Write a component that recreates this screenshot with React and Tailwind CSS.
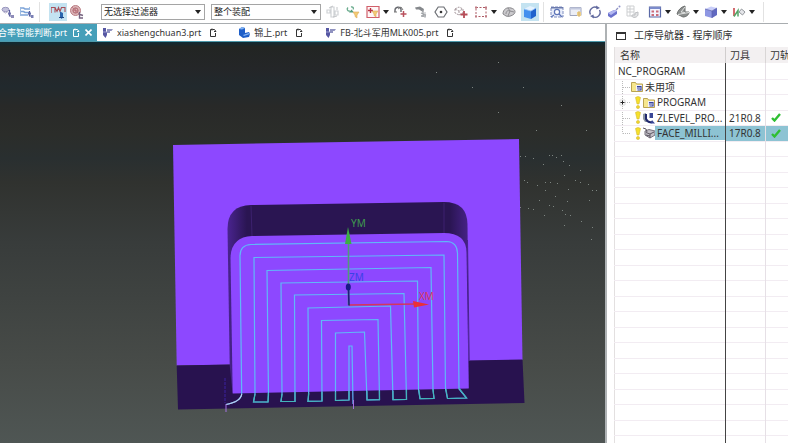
import React, { useState } from "react";

const Svg = ({ children }) => (
  <svg viewBox="0 0 16 16" className="size-4 shrink-0" fill="none">
    {children}
  </svg>
);

const Caret = () => (
  <svg viewBox="0 0 6 4" className="h-1 w-1.5 shrink-0">
    <path d="M0 0h6L3 4z" fill="#222" />
  </svg>
);

// small filter funnel used by several icons
const Funnel = ({ x, y }) => (
  <path d={`M${x} ${y}h6l-2 3v3l-2-1.500v-1.500z`} fill="#f3cb74" stroke="#dba95a" strokeWidth="0.6" />
);

const icons = {
  wcs: (
    <Svg>
      <ellipse cx="5.500" cy="5.500" rx="3.500" ry="2.200" fill="#c3c1dc" stroke="#9a98bf" />
      <path d="M3 7.500L5.500 9 8 7.500" stroke="#b4b1cd" />
      <path d="M9.500 6v6H12" stroke="#5c5f9f" strokeWidth="1.200" />
      <circle cx="9.500" cy="9.500" r="1.500" fill="#686aa8" />
      <path d="M11 11h3v3h-3z" fill="#8f8db9" />
    </Svg>
  ),
  layers: (
    <Svg>
      <path d="M1.500 4h3l1.500 1h5M1.500 7.500h3l1.500 1H10M2 11h7" stroke="#7ea4d8" strokeWidth="1.600" />
      <path d="M1.500 3v9M10.500 3v3" stroke="#9bbbe2" />
      <path d="M10.500 7v5H14" stroke="#4c5699" strokeWidth="1.200" />
      <circle cx="10.500" cy="9.500" r="1.500" fill="#5d66a5" />
      <path d="M12 11h2.500v3H12z" fill="#7b80b5" />
    </Svg>
  ),
  path: (
    <Svg>
      <path d="M1 3.500h4v5M5 3.500l2 4 1.500-4 1.500 4 1.500-4H15V8" stroke="#a8505a" strokeWidth="1.100" />
      <path d="M1.500 9V4" stroke="#c5858b" />
      <path d="M10 7.500l3 1.500v4.500L11.500 15 10 13z" fill="#2a66ad" />
      <path d="M9 13.500h5" stroke="#1c4787" />
    </Svg>
  ),
  spiral: (
    <Svg>
      <circle cx="6.500" cy="6.500" r="5" fill="#dcb6b9" stroke="#bb7d84" />
      <circle cx="6.500" cy="6.500" r="2.600" stroke="#b0666e" />
      <path d="M4 6.500h5M6.500 4v5M3 3l7 7" stroke="#b87078" strokeWidth="0.700" />
      <path d="M10.500 8v6h3.500M11 10.500l3 1" stroke="#766380" strokeWidth="1.400" />
    </Svg>
  ),
  assembly: (
    <Svg>
      <path d="M2 6h3v3H2zM6 3h3v10H6zM10 7h3v4h-3z" stroke="#cfd2d5" strokeWidth="1.200" />
      <path d="M4 4l4-2M8 13l4-1M12 3v3" stroke="#c2c5c8" />
    </Svg>
  ),
  filter: (
    <Svg>
      <path d="M3 3.500c-2 2 0 4 2 3.500M6 3c2-.5 3 1 2 2.500" stroke="#69ab8d" strokeWidth="1.300" />
      <path d="M4 8.500h5L6.500 5.500z" fill="#4f9a7b" />
      <Funnel x={8} y={8} />
    </Svg>
  ),
  snap: (
    <Svg>
      <path d="M2 2.500h12v11H2z" fill="#fff7f7" stroke="#d1606b" strokeWidth="1.200" />
      <path d="M5.500 4v5M3 6.500h5" stroke="#b63243" strokeWidth="1.400" />
      <Funnel x={7} y={7} />
    </Svg>
  ),
  curve: (
    <Svg>
      <path d="M2 8V6c0-3 5-4 6-1v3" stroke="#66686e" strokeWidth="1.400" />
      <path d="M1 8h3M5 5l3-2 2 3" stroke="#777" />
      <path d="M10.500 7v6M7.500 10h6" stroke="#b9505c" strokeWidth="1.500" />
    </Svg>
  ),
  drill: (
    <Svg>
      <path d="M2 3.500l5-1 4 2.500-1 3-4-2.500H3z" fill="#85888c" />
      <path d="M10 6v7M8 9l5 2M8 12h5" stroke="#9fa2a6" strokeWidth="1.300" />
      <path d="M12 8v6" stroke="#b5b7bb" />
    </Svg>
  ),
  hex: (
    <Svg>
      <path d="M5.200 3h5.600L14 8l-3.200 5H5.200L2 8z" stroke="#6c6f74" strokeWidth="1.200" />
      <circle cx="8" cy="8" r="1.300" fill="#333" />
    </Svg>
  ),
  move: (
    <Svg>
      <path d="M2 5l4-2 4 2v4l-4 2-4-2zM2 5l4 2 4-2M6 7v4" stroke="#a5979c" strokeDasharray="2 1" />
      <path d="M11 7v7M7.500 10.500h7" stroke="#b64c57" strokeWidth="1.800" />
    </Svg>
  ),
  marquee: (
    <Svg>
      <path d="M3 3.500h10v9H3z" stroke="#ac5b65" strokeDasharray="2 1.500" />
      <path d="M2 2.500h2v2H2zM12 2.500h2v2h-2zM2 11.500h2v2H2zM12 11.500h2v2h-2z" fill="#c07c84" />
    </Svg>
  ),
  shell: (
    <Svg>
      <path d="M2 10c0-5 4-7 8-6s5 4 3 6-6 3-8 2z" fill="#cbcacd" stroke="#88878b" />
      <path d="M5 10c0-3 2-4 4-3M7 4l2 3 4 1M9 7l-2 5" stroke="#88878b" strokeWidth="0.900" />
    </Svg>
  ),
  cube: (
    <Svg>
      <path d="M2 5l6-3 6 2-5 3z" fill="#e4f2ff" />
      <path d="M2 5l7 2v8l-7-2z" fill="#4490ee" />
      <path d="M9 7l5-3v8l-5 3z" fill="#1f62cc" />
      <path d="M2 5l7 2 5-3" stroke="#9cc8f8" strokeWidth="0.800" />
    </Svg>
  ),
  fit: (
    <Svg>
      <path d="M2 3h12v10H2z" fill="#e8edfa" stroke="#7f8dc0" strokeDasharray="3 1" />
      <path d="M2 3h12v1.500H2z" fill="#6b7aad" />
      <circle cx="8" cy="8" r="2.600" fill="#fff" stroke="#5e75b8" strokeWidth="1.200" />
      <path d="M10 10l3 3M5 11l-3 2" stroke="#5e75b8" strokeWidth="1.200" />
    </Svg>
  ),
  windowView: (
    <Svg>
      <path d="M2 3.500h11v8H2z" fill="#eceef5" stroke="#9ea4bc" />
      <path d="M2 3.500h11v2H2z" fill="#c3c9de" />
      <path d="M9 8h4v4H9z" fill="#ecd08a" />
      <path d="M11 7v6" stroke="#d3b067" />
    </Svg>
  ),
  rotate: (
    <Svg>
      <path d="M3.500 10.500a5 5 0 0 1 1-6 5 5 0 0 1 6-.6M12.500 6a5 5 0 0 1-1 6 5 5 0 0 1-6 .5" stroke="#626a9f" strokeWidth="1.400" />
      <path d="M9 1.500l4 2.500-3.500 1.500zM7 14.500L3 12l3.500-1.500z" fill="#626a9f" />
    </Svg>
  ),
  brush: (
    <Svg>
      <path d="M2 9l6-3 3 1v3l-6 4-3-2z" fill="#6a71cc" />
      <path d="M2 9l6-3 3 1-6 4z" fill="#b3b8f1" />
      <path d="M10 6l2-2" stroke="#8f93c2" strokeWidth="1.300" />
      <circle cx="13.500" cy="2.500" r="1" fill="#8b8fc8" />
    </Svg>
  ),
  section: (
    <Svg>
      <path d="M2 2h7v10H2zM2 5h7M2 8h7M5 2v10" stroke="#cdcfd1" />
      <path d="M7 12c0 2 5 2 6-1V8l-3 1v2H7z" fill="#e2e3e5" stroke="#bdbfc2" />
    </Svg>
  ),
  grid: (
    <Svg>
      <path d="M2.500 3h11v10h-11z" fill="#f4f5ff" stroke="#5a69a6" strokeWidth="1.200" />
      <path d="M2.500 3h11v2h-11z" fill="#7b8bcb" />
      <path d="M4.500 6.500H7v2H4.500zM9 6.500h2.500v2H9zM4.500 10H7v2H4.500zM9 10h2.500v2H9z" fill="#cb6b79" />
    </Svg>
  ),
  fan: (
    <Svg>
      <path d="M2 10c1-4 4-7 8-8v6h4c0 3-3 5-6 5z" fill="#8b8e8d" stroke="#6f7271" />
      <path d="M10 3L6 8l4 .5M3 10.500l5-1 6-1" stroke="#e2e4e3" />
    </Svg>
  ),
  box: (
    <Svg>
      <path d="M2 5l6-2.500L14 4 9 7z" fill="#c9cef9" />
      <path d="M2 5l7 2v7l-7-2z" fill="#8e97e3" />
      <path d="M9 7l5-3v7l-5 3z" fill="#6169c1" />
      <path d="M2 5l7 2 5-3M9 7v7" stroke="#5b62ab" strokeWidth="0.700" />
    </Svg>
  ),
  verify: (
    <Svg>
      <path d="M3 4v8" stroke="#cf5c60" strokeWidth="1.800" />
      <path d="M3 12.500l4-6v6" stroke="#52a566" strokeWidth="1.500" />
      <path d="M8 8l2.500-3L14 8l-2.500 3z" fill="#e5e6ea" stroke="#93979c" />
    </Svg>
  ),
};

const ToolButton = ({ icon, label, menu, active }) => (
  <button
    aria-label={label}
    className={
      active
        ? "flex h-[18px] items-center justify-center bg-[#c4e3f1] px-px"
        : "flex h-[18px] items-center justify-center gap-0.5"
    }
  >
    {icons[icon]}
    {menu && <Caret />}
  </button>
);

const Separator = () => <div className="mx-1 h-5 w-px shrink-0 bg-[#e2e2e2]" />;

const Combo = ({ label, options, width }) => (
  <div className={`relative ${width}`}>
    <select
      aria-label={label}
      className="block h-4 w-full appearance-none border border-[#a5a5a5] bg-white pl-0.5 text-[9px] leading-[14px] text-[#222]"
    >
      {options.map((o) => (
        <option key={o}>{o}</option>
      ))}
    </select>
    <div className="pointer-events-none absolute inset-y-0 right-1 flex items-center">
      <Caret />
    </div>
  </div>
);

const Toolbar = () => (
  <div className="flex h-6 shrink-0 items-center overflow-hidden border-b border-[#a9adb0] bg-white">
    <div className="flex items-center gap-[3px]">
      <ToolButton icon="wcs" label="WCS" />
      <ToolButton icon="layers" label="Layers" />
    </div>
    <Separator />
    <div className="mr-4 ml-[5px] flex items-center gap-0.5">
      <ToolButton icon="path" label="Tool path" active />
      <ToolButton icon="spiral" label="Spiral" />
    </div>
    <div className="mr-1 flex shrink-0 gap-1.5">
      <Combo label="过滤器" options={["无选择过滤器"]} width="w-[104px]" />
      <Combo label="范围" options={["整个装配"]} width="w-[110px]" />
    </div>
    <div className="flex items-center gap-1">
      <ToolButton icon="assembly" label="Assembly" />
      <ToolButton icon="filter" label="Filter" />
      <ToolButton icon="snap" label="Snap" menu />
      <ToolButton icon="curve" label="Curve" />
      <ToolButton icon="drill" label="Drill" />
      <ToolButton icon="hex" label="Point" />
      <ToolButton icon="move" label="Move" />
      <ToolButton icon="marquee" label="Marquee" menu />
      <ToolButton icon="shell" label="Shell" />
      <ToolButton icon="cube" label="Shaded" active />
    </div>
    <Separator />
    <div className="ml-px flex items-center gap-[3px]">
      <ToolButton icon="fit" label="Fit" />
      <ToolButton icon="windowView" label="Window" />
      <ToolButton icon="rotate" label="Rotate" />
      <ToolButton icon="brush" label="Brush" />
      <ToolButton icon="section" label="Section" />
    </div>
    <div className="mr-1 ml-1.5 flex items-center gap-1">
      <ToolButton icon="grid" label="Grid" menu />
      <ToolButton icon="fan" label="Orient" menu />
      <ToolButton icon="box" label="Render" menu />
      <ToolButton icon="verify" label="Verify" menu />
    </div>
    <Separator />
  </div>
);

const DocIcon = () => (
  <svg viewBox="0 0 8 9" className="h-[9px] w-2 shrink-0" fill="none" stroke="currentColor">
    <path d="M6.500 5v3.500h-5v-7h2M3.500 1.500h2l1.500 2H5M3 .5v2" />
  </svg>
);

const PartIcon = () => (
  <svg viewBox="0 0 11 11" className="size-[11px] shrink-0">
    <path d="M1 1h3v4h1v3L3.500 11 1 8z" fill="#5657a3" />
    <path d="M5 2h6L9.500 4H8v2H5z" fill="#9093c0" />
    <path d="M1 5h4" stroke="#9da0d2" />
  </svg>
);

const ModelIcon = () => (
  <svg viewBox="0 0 11 11" className="size-[11px] shrink-0">
    <path d="M0 2l3-2 3 1v5l4-1 1 2-1 3-6 1-4-3z" fill="#1f5fc9" />
    <path d="M0 2l3-2 3 1-3 1.500zM4 8l6-2 1 1-6 2z" fill="#86b6f4" />
  </svg>
);

const tabs = [
  { name: "xiashengchuan3.prt", Icon: PartIcon },
  { name: "锦上.prt", Icon: ModelIcon },
  { name: "FB-北斗军用MLK005.prt", Icon: PartIcon },
];

const TabBar = () => (
  <div className="flex h-[18px] shrink-0 items-stretch overflow-hidden border-b border-[#4e9aab] bg-white text-[9px]">
    <div className="flex w-[97px] shrink-0 items-center justify-end gap-[5px] overflow-hidden bg-[#459fb9] pr-[5px] text-white">
      <span className="shrink-0 whitespace-nowrap">合率智能判断.prt</span>
      <DocIcon />
      <button aria-label="Close" className="flex">
        <svg viewBox="0 0 7 7" className="size-[7px]" stroke="#fff" strokeWidth="1.600">
          <path d="M.5.5l6 6M6.500.5l-6 6" />
        </svg>
      </button>
    </div>
    <div className="flex items-center gap-[22px] pl-[5px]">
      {tabs.map(({ name, Icon }) => (
        <button key={name} className="flex items-center gap-1 whitespace-nowrap text-[#333]">
          <Icon />
          <span className="pr-1">{name}</span>
          <DocIcon />
        </button>
      ))}
    </div>
  </div>
);

const stars = [
  [436, 72], [498, 62], [472, 87], [523, 87], [561, 105], [498, 112], [536, 130], [586, 130],
  [520, 156], [525, 156], [533, 158], [543, 164], [549, 155], [552, 155], [556, 157], [561, 155],
  [563, 161], [569, 165], [580, 170], [564, 175], [575, 180], [580, 182], [524, 180], [527, 182],
  [537, 185], [545, 182], [550, 182], [557, 183], [545, 190], [568, 189], [588, 184], [592, 190],
  [596, 190], [555, 196], [539, 200], [567, 201], [589, 200], [549, 205], [553, 206], [520, 207],
  [528, 208], [533, 209], [544, 215], [562, 210], [565, 214], [570, 215], [581, 221], [564, 225],
  [592, 227], [591, 239],
];

const toolPath =
  "M226 404.500C234 403 241 400 241.700 394L240 256Q240 245 251 244.500L447 241.500Q457 242 457.500 253L459 389L466.500 398L447.500 398.500L445.500 389L444 255L254 257.500L255 394L253.500 402H268L268.500 395L267 270.500L431 267.500L433 390L434 398.300L420 398.600L418.500 390L417.500 281L281 283L282 394L281 401.500H295L294.500 295L404 293.500L406.500 399.300L393 399.600L390.500 306L308 308L308.700 394L308 401.300L322 401L321.500 320.500L378 319.500L379.500 399.600L367 400L364.500 332L335.500 333V400.500L349 400L349 346H352L353 404";

const Viewport = () => (
  <div className="min-h-0 flex-1 bg-[#2b2e2d]">
    <svg viewBox="0 42 605 401" preserveAspectRatio="xMidYMid slice" className="block h-full w-full">
      <defs>
        <linearGradient id="bg" x1="0" y1="0" x2="0" y2="1">
          <stop offset="0" stopColor="#0f2a33" />
          <stop offset="0.012" stopColor="#222523" />
          <stop offset="0.065" stopColor="#242628" />
          <stop offset="0.110" stopColor="#21292d" />
          <stop offset="0.160" stopColor="#282928" />
          <stop offset="0.230" stopColor="#2b2d2a" />
          <stop offset="0.290" stopColor="#292f30" />
          <stop offset="0.350" stopColor="#30322f" />
          <stop offset="0.500" stopColor="#383c3b" />
          <stop offset="0.800" stopColor="#474b48" />
          <stop offset="1" stopColor="#4f5654" />
        </linearGradient>
        <linearGradient id="wall" x1="0" y1="0" x2="1" y2="0">
          <stop offset="0" stopColor="#4a2490" />
          <stop offset="0.080" stopColor="#2a1552" />
          <stop offset="0.920" stopColor="#2a1552" />
          <stop offset="1" stopColor="#472389" />
        </linearGradient>
      </defs>
      <rect y="42" width="605" height="401" fill="url(#bg)" />
      {stars.map(([x, y], i) => (
        <rect key={i} x={x} y={y} width="1" height="1" fill="#7d8581" />
      ))}

      {/* block: top face, front face, pocket wall, pocket floor */}
      <path d="M173 145L519 139L522.500 360L176.700 365.500z" fill="#8d48ff" />
      <path d="M176.700 365.500L522.500 359.500L524.500 403L178 409.500z" fill="#28124f" />
      <path d="M227.500 229Q227.500 205.500 251 205L444 202Q467 202 467.500 224L469 388L232.500 393L229.700 365z" fill="url(#wall)" />
      <path d="M251 205.500L252 236M444 202.500V233" stroke="#3c216e" strokeWidth="1" />
      <path d="M230.500 258Q231 237 252 236L444 233Q466 233 466.500 252L468.700 388.500L232.700 393.500z" fill="#8d48ff" />
      <path d="M467.500 240L469.200 360" stroke="#4a238f" strokeWidth="1" />

      <path d={toolPath} fill="none" stroke="#60b8f8" strokeWidth="1.200" />
      <path d="M255 394L253.500 402H268L268.300 393M282 394L281 401.500H295V392M308.600 393L308 401.300L322 401V392M335.500 392V400.500L349 400V391M367 391V400L379.500 399.600V391M393 391V399.600L406.500 399.300V390M419 390L420 398.600L434 398.300L433 389M446 389L447.500 398.500L466.500 398L459 388" fill="none" stroke="#43b5ba" strokeWidth="1.200" />
      <path d="M226 404.500C234 403 241 400 241.700 394" fill="none" stroke="#b9cdf0" strokeWidth="1.200" />
      <path d="M225 378V403" stroke="#3b20a0" strokeDasharray="3 1" />
      <path d="M226 404V412M353.500 400V409" stroke="#a475e0" />

      {/* machine coordinate system */}
      <path d="M348.500 305V242" stroke="#4f9b78" strokeWidth="1.600" />
      <path d="M348 227L351.500 244H345z" fill="#3cae43" />
      <path d="M349 305L416 304" stroke="#d3375b" strokeWidth="1.600" />
      <path d="M413 301L429 304.500L414 307.500z" fill="#ea3038" />
      <path d="M349 305.500L348.500 288" stroke="#201c7a" strokeWidth="1.600" />
      <ellipse cx="348.300" cy="287" rx="2.500" ry="3.500" fill="#1a1a86" />
      <g fontSize="10">
        <text x="351" y="227" fill="#3f9c4e">YM</text>
        <text x="349" y="281" fill="#3a42e6">ZM</text>
        <text x="419" y="300" fill="#d93a62">XM</text>
      </g>
    </svg>
  </div>
);

const Bang = () => (
  <svg viewBox="0 0 6 13" className="h-[13px] w-1.5 shrink-0">
    <path d="M.5 1.500Q3-.5 5.500 1.500L4 8H2z" fill="#f6e02a" stroke="#d3bb35" strokeWidth="0.600" />
    <circle cx="3" cy="11" r="1.600" fill="#f1d62a" stroke="#cdb233" strokeWidth="0.500" />
  </svg>
);

const Folder = () => (
  <svg viewBox="0 0 12 11" className="h-[11px] w-3 shrink-0">
    <path d="M.5 1.500h4l1 1.500h6v7.500H.5z" fill="#f6e78e" stroke="#b9a352" />
    <path d="M5 4h6v6H5z" fill="#efeffa" />
    <path d="M6 5.500h4v3.500H6.500M6 7h3" stroke="#34439c" strokeWidth="1.200" fill="none" />
  </svg>
);

const ZLevel = () => (
  <svg viewBox="0 0 12 12" className="size-3 shrink-0">
    <path d="M0 2l3-1v6l2 3H2L0 7z" fill="#8d96a3" />
    <path d="M3 2v5q2 4 6 3" fill="none" stroke="#20286d" strokeWidth="2" />
    <path d="M6.500 1H10v5H6.500zM9 8l3 3.500H7.500z" fill="#3a4696" />
  </svg>
);

const FaceMill = () => (
  <svg viewBox="0 0 12 12" className="size-3 shrink-0">
    <path d="M2 4l4-1.500L12 4v4l-5 3-5-3z" fill="#c3c0c8" stroke="#77727d" />
    <path d="M0 1l3 1 1 3M3 5.500l4 1.500 4-2M7 7v4M3 8l4 1" stroke="#5d5863" fill="none" />
  </svg>
);

const Check = () => (
  <svg viewBox="0 0 10 9" className="h-[9px] w-2.5">
    <path d="M1 5l2.500 2.500L9 1" fill="none" stroke="#2fbf33" strokeWidth="2.400" />
  </svg>
);

// dotted tree line in front of a row
const Branch = ({ last, plus }) => (
  <svg viewBox="0 0 14 16" className="h-4 w-3.5 shrink-0" fill="none" stroke="#bbb">
    <path d={last ? "M4.500 0v8.500" : "M4.500 0v16"} strokeDasharray="1 1" />
    <path d="M5 8.500h8" strokeDasharray="1 1" />
    {plus && <path d="M2 6h5v5H2z" fill="#fff" stroke="#ddd" />}
    {plus && <path d="M2.500 8.500h4M4.500 6.500v4" stroke="#222" />}
  </svg>
);

const rows = [
  { name: "NC_PROGRAM", root: true },
  { name: "未用项", Icon: Folder },
  { name: "PROGRAM", Icon: Folder, bang: true, plus: true },
  { name: "ZLEVEL_PRO...", Icon: ZLevel, bang: true, tool: "21R0.8", done: true },
  { name: "FACE_MILLI...", Icon: FaceMill, bang: true, tool: "17R0.8", done: true, last: true },
];

const blankRows = Array.from({ length: 20 }, () => ({}));

const Navigator = () => {
  const [selected, setSelected] = useState("FACE_MILLI...");

  return (
    <aside className="flex w-[183px] shrink-0 flex-col overflow-hidden border-l-2 border-[#aeb2b4] bg-white pl-[7px] text-[10px] text-[#333]">
      <h2 className="flex h-[23px] shrink-0 items-center gap-2 pl-0.5 text-[10px]">
        <span className="h-2 w-2.5 border border-t-2 border-[#333]" />
        工序导航器 - 程序顺序
      </h2>
      <table className="w-full table-fixed border-collapse border-l border-[#e3e0e0]">
        <thead>
          <tr className="h-4 bg-[#f3f0f1] text-left leading-4">
            <th className="w-[111px] border-r border-[#d0cdcd] pl-[5px] font-normal">名称</th>
            <th className="w-10 border-r border-[#d9d6d6] pl-1 font-normal">刀具</th>
            <th className="overflow-hidden pl-1 font-normal whitespace-nowrap">刀轨</th>
          </tr>
        </thead>
        <tbody>
          {[...rows, ...blankRows].map((row, i) => {
            const on = row.name && row.name === selected;
            const fill = on ? "bg-[#8dc3d3]" : "";
            return (
              <tr
                key={i}
                onClick={() => row.name && setSelected(row.name)}
                className="border-b border-[#f2ecf2] leading-[14px] odd:h-4 even:h-[15px]"
              >
                <td className="overflow-hidden border-r border-[#444] p-0">
                  {row.name && (
                    <div className="flex h-[14px] items-center whitespace-nowrap">
                      {!row.root && (
                        <span className="flex w-4 shrink-0 items-center pl-[3px]">
                          <Branch last={row.last} plus={row.plus} />
                        </span>
                      )}
                      {row.bang && (
                        <span className="flex w-3 shrink-0 justify-center pl-px">
                          <Bang />
                        </span>
                      )}
                      {row.Icon && <row.Icon />}
                      <span className={`h-[14px] flex-1 ${row.root ? "pl-[3px]" : "pl-0.5"} ${fill}`}>{row.name}</span>
                    </div>
                  )}
                </td>
                <td className={`border-r border-[#e6e0e6] py-0 pr-0 pl-[3px] ${fill}`}>{row.tool}</td>
                <td className={`py-0 pr-0 pl-[5px] ${fill}`}>{row.done && <Check />}</td>
              </tr>
            );
          })}
        </tbody>
      </table>
    </aside>
  );
};

const App = () => {
  return (
    <div className="flex h-screen flex-col overflow-hidden bg-white font-['Noto_Sans','Noto_Sans_CJK_SC',sans-serif]">
      <Toolbar />
      <div className="flex min-h-0 flex-1">
        <main className="flex min-w-0 flex-1 flex-col">
          <TabBar />
          <Viewport />
        </main>
        <Navigator />
      </div>
    </div>
  );
};

export default App;
